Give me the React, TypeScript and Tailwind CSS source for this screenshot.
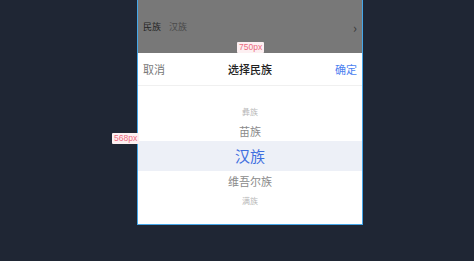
const FONT = "font-['Noto_Sans_CJK_SC','Noto_Sans',sans-serif]";

const ROWS = [
  { label: "彝族", cls: "h-[19px] text-[8px] text-[#b8b8b8]" },
  { label: "苗族", cls: "h-[20px] text-[11px] text-[#8a8a8a]" },
  { label: "汉族", cls: "h-[30px] text-[15px] text-[#3f6fdf] bg-[#edf0f7]" },
  { label: "维吾尔族", cls: "h-[20px] text-[11px] text-[#8a8a8a]" },
  { label: "满族", cls: "h-[19px] text-[8px] text-[#b8b8b8]" },
];

function Tag({ text }: { text: string }) {
  return (
    <span className="rounded-[1px] bg-[#fdf0f2] px-[2px] text-[8.5px] leading-[11px] text-[#ec6a80] font-['Liberation_Sans',sans-serif]">
      {text}
    </span>
  );
}

export default function App() {
  return (
    <div className={`relative h-[261px] w-[474px] bg-[#1f2634] ${FONT}`}>
      <div className="ml-[137px] flex h-[225px] w-[226px] flex-col border border-t-0 border-[#45a6e8]">
        {/* dimmed page behind sheet */}
        <div className="flex h-[53px] items-center bg-[#787878] pl-[5px] pr-[5px] pt-[1px]">
          <span className="text-[9px] text-[#262626]">民族</span>
          <span className="ml-[8px] text-[9px] text-[#4a4a4a]">汉族</span>
          <span className="ml-auto text-[13px] leading-none text-[#3a3a3a]">›</span>
        </div>

        {/* sheet */}
        <div className="flex flex-1 flex-col bg-white">
          <div className="flex h-[33px] items-center justify-between border-b border-[#f0f0f0] px-[5px]">
            <span className="text-[11px] text-[#777]">取消</span>
            <span className="text-[11px] font-medium text-[#222]">选择民族</span>
            <span className="text-[11px] text-[#4b7ff0]">确定</span>
          </div>
          <div className="flex flex-col pt-[16px]">
            {ROWS.map((r) => (
              <div key={r.label} className={`flex items-center justify-center ${r.cls}`}>
                {r.label}
              </div>
            ))}
          </div>
        </div>
      </div>

      <div className="absolute left-[237px] top-[42px] flex">
        <Tag text="750px" />
      </div>
      <div className="absolute left-[112px] top-[133px] flex">
        <Tag text="568px" />
      </div>
    </div>
  );
}
